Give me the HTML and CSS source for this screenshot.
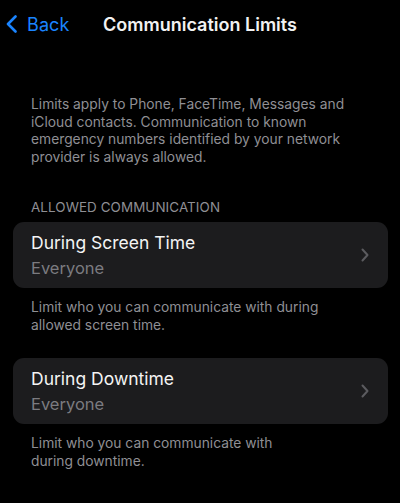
FILE: index.html
```html
<!DOCTYPE html>
<html lang="en">
<head>
<meta charset="utf-8">
<title>Communication Limits</title>
<link rel="stylesheet" href="styles.css">
</head>
<body>
<header class="nav">
  <a class="back" href="#">
    <svg class="back-icon" width="13" height="18" viewBox="0 0 13 18" aria-hidden="true">
      <path d="M10.5 1.5 L3 9 L10.5 16.5" fill="none" stroke="currentColor" stroke-width="2.6" stroke-linecap="round" stroke-linejoin="round"/>
    </svg>
    <span>Back</span>
  </a>
  <h1 class="title">Communication Limits</h1>
</header>

<main class="content">
  <p class="intro">Limits apply to Phone, FaceTime, Messages and iCloud contacts. Communication to known emergency numbers identified by your network provider is always allowed.</p>

  <section class="group">
    <h2 class="group-header">ALLOWED COMMUNICATION</h2>
    <a class="cell" href="#">
      <div class="cell-text">
        <span class="cell-title">During Screen Time</span>
        <span class="cell-value">Everyone</span>
      </div>
      <svg class="chevron" width="8" height="14" viewBox="0 0 8 14" aria-hidden="true">
        <path d="M1.5 1.5 L6.5 7 L1.5 12.5" fill="none" stroke="currentColor" stroke-width="2" stroke-linecap="round" stroke-linejoin="round"/>
      </svg>
    </a>
    <p class="group-footer">Limit who you can communicate with during<br>allowed screen time.</p>
  </section>

  <section class="group">
    <a class="cell" href="#">
      <div class="cell-text">
        <span class="cell-title">During Downtime</span>
        <span class="cell-value">Everyone</span>
      </div>
      <svg class="chevron" width="8" height="14" viewBox="0 0 8 14" aria-hidden="true">
        <path d="M1.5 1.5 L6.5 7 L1.5 12.5" fill="none" stroke="currentColor" stroke-width="2" stroke-linecap="round" stroke-linejoin="round"/>
      </svg>
    </a>
    <p class="group-footer">Limit who you can communicate with<br>during downtime.</p>
  </section>
</main>
</body>
</html>
```

FILE: styles.css
```css
* {
  box-sizing: border-box;
}

html, body {
  margin: 0;
  padding: 0;
  background: #000;
}

body {
  font-family: Inter, "Liberation Sans", Arial, sans-serif;
  color: #fff;
  width: 400px;
  height: 503px;
  overflow: hidden;
}

a {
  text-decoration: none;
  color: inherit;
}

/* navigation bar */
.nav {
  position: relative;
  height: 48px;
  display: flex;
  align-items: center;
}

.back {
  display: flex;
  align-items: center;
  gap: 9px;
  padding-left: 5px;
  color: #1a84ff;
  font-size: 18px;
  letter-spacing: 0.1px;
  z-index: 1;
}

.back-icon {
  display: block;
}

.title {
  position: absolute;
  left: 0;
  right: 0;
  margin: 0;
  text-align: center;
  font-size: 18px;
  font-weight: 600;
  color: #f2f2f2;
}

/* page body */
.content {
  padding: 48px 12px 0 13px;
}

.intro {
  margin: 0 0 0 18px;
  max-width: 322px;
  font-size: 13.8px;
  line-height: 17.6px;
  color: #8f8f94;
}

.group-header {
  margin: 33px 0 7px 18px;
  font-size: 13.4px;
  font-weight: 400;
  color: #8f8f94;
  letter-spacing: 0.1px;
}

.cell {
  display: flex;
  align-items: center;
  justify-content: space-between;
  height: 66px;
  padding: 0 19px 0 18px;
  border-radius: 11px;
  background: #1c1c1e;
}

.cell-text {
  display: flex;
  flex-direction: column;
  gap: 4px;
}

.cell-title {
  font-size: 17.5px;
  line-height: 22px;
  color: #f4f4f4;
}

.cell-value {
  font-size: 16.5px;
  line-height: 21px;
  color: #7b7b80;
}

.chevron {
  display: block;
  color: #5b5b5f;
}

.group-footer {
  margin: 10px 0 24px 18px;
  font-size: 13.8px;
  line-height: 18px;
  color: #8f8f94;
}
```
